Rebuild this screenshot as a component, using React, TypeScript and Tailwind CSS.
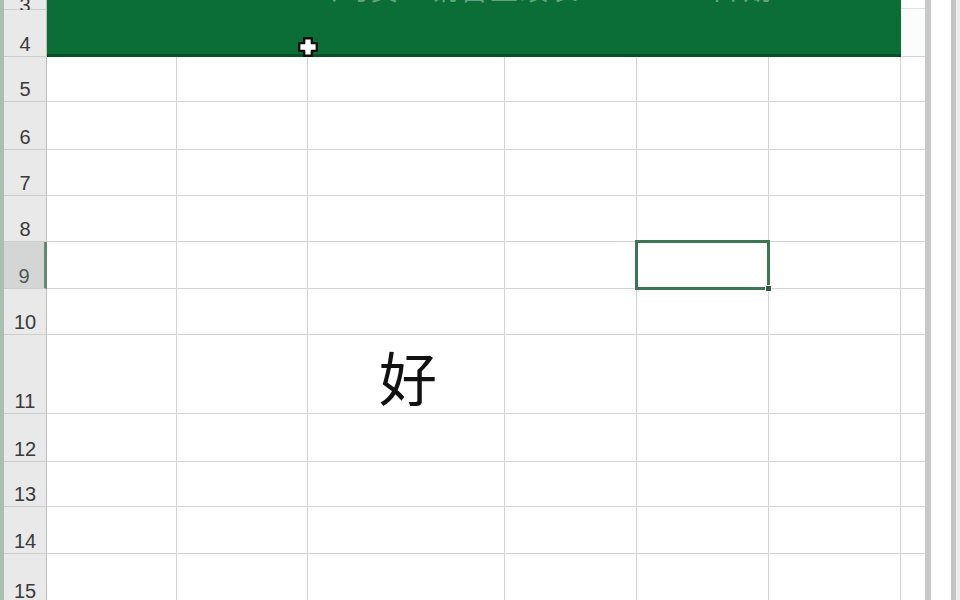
import React from 'react';

const colWidths = ['w-[130px]', 'w-[131px]', 'w-[197px]', 'w-[132px]', 'w-[132px]', 'w-[132px]', 'w-[24px]'];

const rows: { n: number; h: string }[] = [
  { n: 5, h: 'h-[45px]' },
  { n: 6, h: 'h-[48px]' },
  { n: 7, h: 'h-[46px]' },
  { n: 8, h: 'h-[46px]' },
  { n: 9, h: 'h-[47px]' },
  { n: 10, h: 'h-[46px]' },
  { n: 11, h: 'h-[79px]' },
  { n: 12, h: 'h-[48px]' },
  { n: 13, h: 'h-[45px]' },
  { n: 14, h: 'h-[47px]' },
  { n: 15, h: 'h-[50px]' },
];

const RowHeader = ({ n, h, active }: { n: number; h: string; active?: boolean }) => (
  <div
    className={`${h} w-[43px] shrink-0 flex items-end justify-center pb-[2px] text-[20px] leading-[20px] border-b border-[#cdcdcd] ${
      active
        ? 'bg-[#d4d6d5] text-[#555] border-r-[3px] border-r-[#5d8a70]'
        : 'bg-[#e9e9e9] text-[#3a3a3a] border-r border-r-[#bdbdbd]'
    }`}
  >
    {n}
  </div>
);

const PlusCursor = () => (
  <svg width="22" height="22" viewBox="0 0 20 20" className="absolute left-[250px] top-[36px]">
    <path
      d="M6.5 2h7v4.5H18v7h-4.5V18h-7v-4.5H2v-7h4.5z"
      fill="#ffffff"
      stroke="#111111"
      strokeWidth="2.2"
      strokeLinejoin="round"
    />
  </svg>
);

export default function App() {
  return (
    <div className="w-[960px] h-[600px] overflow-hidden bg-white flex font-['Liberation_Sans',Arial,sans-serif]">
      <div className="w-[4px] shrink-0 bg-[#a9bfb2]" />

      <div className="w-[921px] shrink-0 flex flex-col">
        {/* rows 3-4 with the green merged band */}
        <div className="flex shrink-0">
          <div className="flex flex-col">
            <div className="h-[10px] w-[43px] overflow-visible flex items-end justify-center text-[20px] leading-[20px] text-[#3a3a3a] bg-[#e9e9e9] border-b border-[#cdcdcd] border-r border-r-[#bdbdbd]">
              <span className="-mb-[6px]">3</span>
            </div>
            <RowHeader n={4} h="h-[47px]" />
          </div>
          <div className="relative w-[854px] h-[57px] bg-[#0b6e36] border-b-[3px] border-[#075029] overflow-visible">
            <div className="absolute inset-0 overflow-hidden">
              <div className="absolute left-[263px] -top-[26px] text-[28px] leading-[28px] text-white/40 font-['Noto_Sans_CJK_SC',sans-serif] tracking-[2px]">
                公司员工销售业绩表
              </div>
              <div className="absolute left-[664px] -top-[26px] text-[28px] leading-[28px] text-white/40 font-['Noto_Sans_CJK_SC',sans-serif] tracking-[4px]">
                日期
              </div>
            </div>
            <PlusCursor />
          </div>
          <div className="flex flex-col">
            <div className="h-[9px] w-[24px] border-b border-[#e0e0e0]" />
            <div className="h-[48px] w-[24px] border-b border-[#d4d4d4] bg-[#fbfdfc]" />
          </div>
        </div>

        {rows.map((r) => (
          <div key={r.n} className="flex shrink-0">
            <RowHeader n={r.n} h={r.h} active={r.n === 9} />
            {colWidths.map((w, i) => (
              <div key={i} className={`${w} ${r.h} shrink-0 relative border-r border-b border-[#d4d4d4] ${i === 6 ? 'border-r-0' : ''}`}>
                {r.n === 11 && i === 2 && (
                  <div className="absolute inset-0 flex items-center justify-center pt-[4px] pl-[4px] text-[58px] leading-[58px] text-[#111] font-['Noto_Sans_CJK_SC',sans-serif]">
                    好
                  </div>
                )}
                {r.n === 9 && i === 4 && (
                  <div className="absolute -left-[2px] -top-[2px] w-[135px] h-[50px] border-[3px] border-[#3a7556] z-10">
                    <div className="absolute -right-[5px] -bottom-[5px] w-[7px] h-[7px] bg-[#2e5c43] border border-white" />
                  </div>
                )}
              </div>
            ))}
          </div>
        ))}
      </div>

      <div className="w-[6px] shrink-0 bg-[#c8c8c8]" />
      <div className="w-[20px] shrink-0 bg-white" />
      <div className="w-[5px] shrink-0 bg-[#c4c6c5]" />
      <div className="w-[4px] shrink-0 bg-[#eeeeee]" />
    </div>
  );
}
